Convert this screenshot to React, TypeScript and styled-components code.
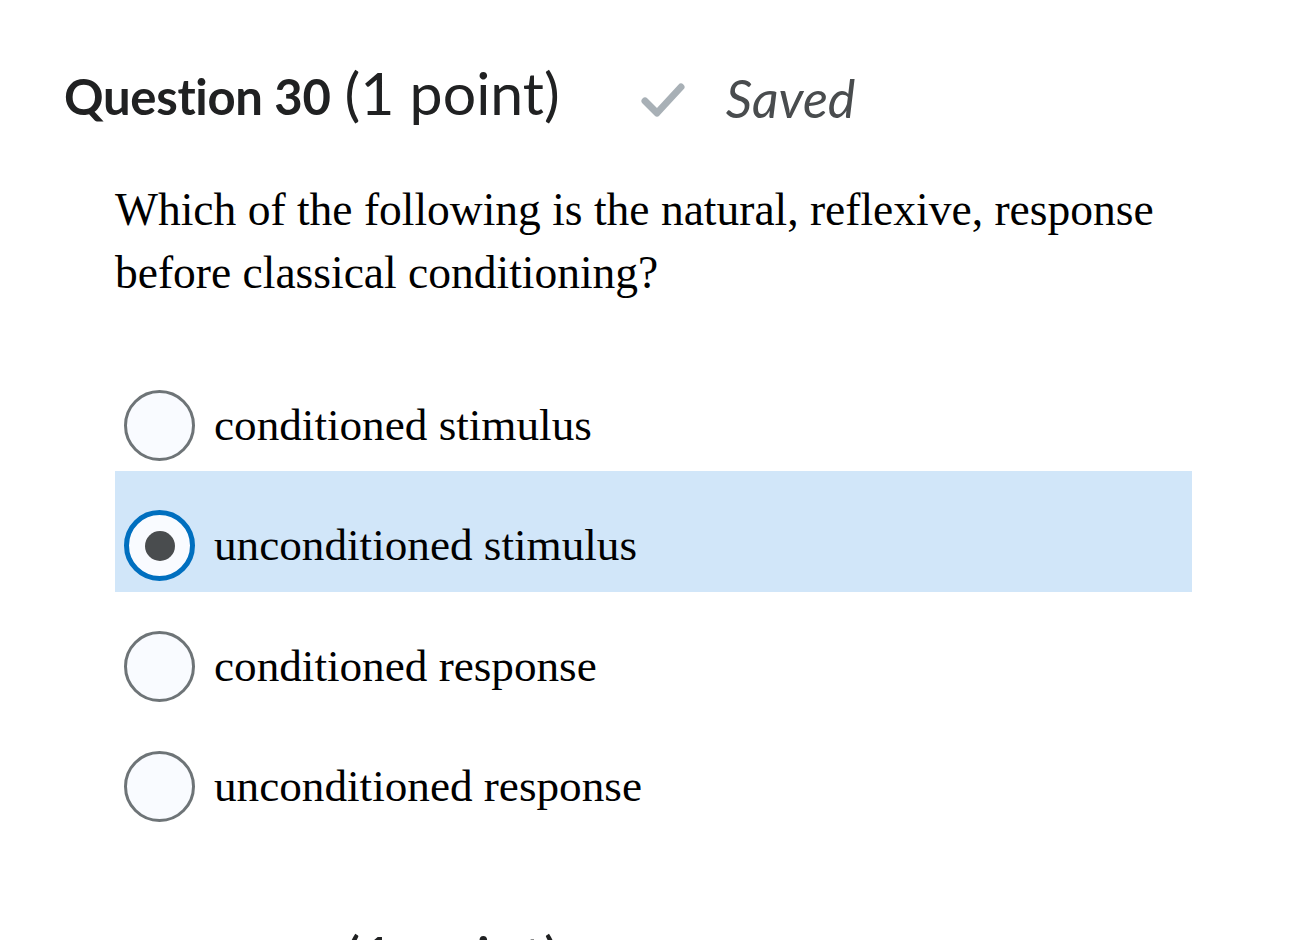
import React from "react";
import styled, { createGlobalStyle } from "styled-components";

const Global = createGlobalStyle`
  html, body { margin: 0; padding: 0; background: #ffffff; }
  body { font-family: "Liberation Serif", serif; color: #000; }
`;

const Page = styled.div`
  width: 1290px;
  height: 940px;
  overflow: hidden;
  box-sizing: border-box;
  padding: 58px 0 0 64px;
`;

const Header = styled.div`
  display: flex;
  align-items: baseline;
  font-family: Lato, sans-serif;
  color: #202122;
  line-height: 1.2;
`;

const QTitle = styled.span`
  font-weight: 700;
  font-size: 49px;
  letter-spacing: -0.3px;
`;

const Points = styled.span`
  font-weight: 400;
  font-size: 59px;
  margin-left: 14px;
`;

const Status = styled.span`
  display: inline-flex;
  align-items: baseline;
  margin-left: 80px;
  font-family: Lato, sans-serif;
  font-style: italic;
  font-size: 52px;
  color: #494c4e;
  position: relative;
  top: 3px;
`;

const Check = styled.svg`
  width: 46px;
  height: 36px;
  margin-right: 40px;
  align-self: center;
  position: relative;
  top: 2px;
`;

const Body = styled.div`
  padding-left: 51px;
  margin-top: 49px;
`;

const Prompt = styled.p`
  margin: 0;
  font-size: 45.5px;
  line-height: 63px;
  width: 1080px;
`;

const Options = styled.div`
  margin-top: 47px;
  width: 1077px;
  display: flex;
  flex-direction: column;
`;

const Option = styled.label<{ $selected?: boolean }>`
  box-sizing: border-box;
  display: flex;
  align-items: flex-start;
  height: 120.5px;
  padding: 39px 0 0 9px;
  background: ${(p) => (p.$selected ? "#d1e6f9" : "transparent")};
  font-size: 45.2px;
  line-height: 71px;
`;

const Radio = styled.span<{ $selected?: boolean }>`
  box-sizing: border-box;
  width: 71px;
  height: 71px;
  border-radius: 50%;
  border: ${(p) => (p.$selected ? "5px solid #006fbf" : "3px solid #6e7477")};
  background: #f9fbff;
  display: flex;
  align-items: center;
  justify-content: center;
  margin-right: 19px;
  flex-shrink: 0;
`;

const Dot = styled.span`
  width: 30px;
  height: 30px;
  border-radius: 50%;
  background: #494c4e;
`;

const NextHeader = styled(Header)`
  margin-top: 89px;
`;

const options = [
  "conditioned stimulus",
  "unconditioned stimulus",
  "conditioned response",
  "unconditioned response",
];

export default function App() {
  return (
    <>
      <Global />
      <Page>
        <Header>
          <QTitle>Question 30</QTitle>
          <Points>(1 point)</Points>
          <Status>
            <Check viewBox="0 0 46 36">
              <path d="M5 19 L17 31 L41 5" fill="none" stroke="#a8b0b6" strokeWidth="7" strokeLinecap="round" strokeLinejoin="round" />
            </Check>
            Saved
          </Status>
        </Header>
        <Body>
          <Prompt>
            Which of the following is the natural, reflexive, response before classical conditioning?
          </Prompt>
          <Options>
            {options.map((o, i) => (
              <Option key={o} $selected={i === 1}>
                <Radio $selected={i === 1}>{i === 1 && <Dot />}</Radio>
                {o}
              </Option>
            ))}
          </Options>
        </Body>
        <NextHeader>
          <QTitle>Question 31</QTitle>
          <Points>(1 point)</Points>
        </NextHeader>
      </Page>
    </>
  );
}
